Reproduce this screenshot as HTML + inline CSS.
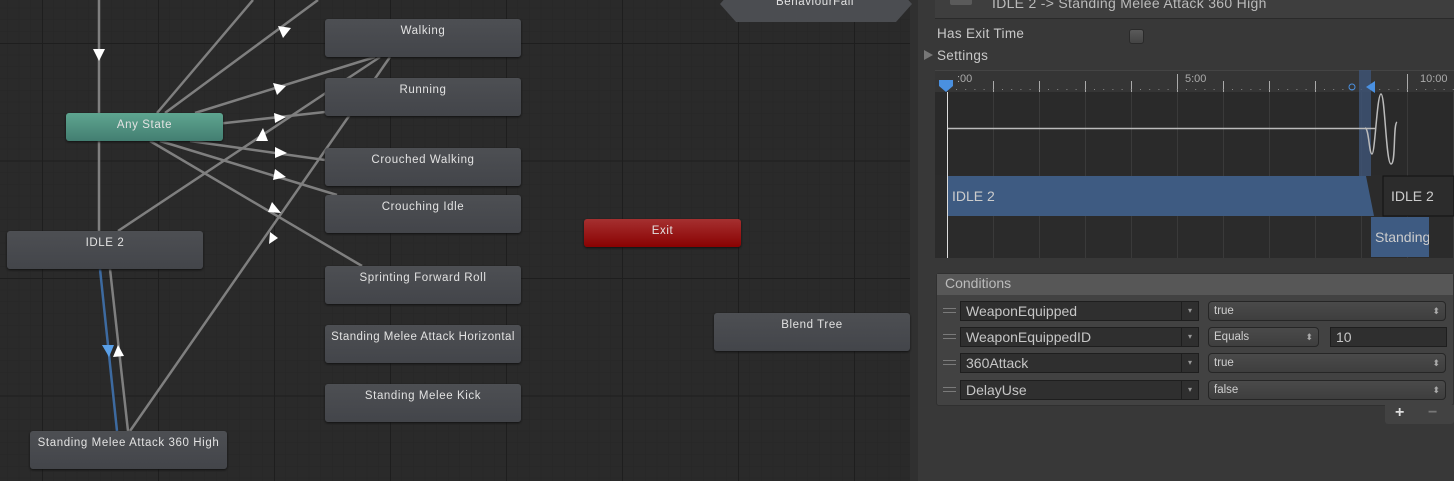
<!DOCTYPE html>
<html><head><meta charset="utf-8"><style>
*{margin:0;padding:0;box-sizing:border-box}
body{width:1454px;height:481px;overflow:hidden;background:#282828;font-family:"Liberation Sans",sans-serif;position:relative}
.abs{position:absolute}
.node{position:absolute;border-radius:3px;background:linear-gradient(#4d4f53,#43454a);box-shadow:0 1px 2px #111;color:#e2e2e2;font-size:11.5px;text-align:center;padding-top:6px;letter-spacing:0.6px;white-space:nowrap}
.panel{position:absolute;left:918px;top:0;width:536px;height:481px;background:#383838}
.t{position:absolute;color:#c8c8c8;font-size:13.5px;letter-spacing:0.3px}
.dd{position:absolute;height:20px;background:#2f2f2f;border:1px solid #1e1e1e;color:#c6c6c6;font-size:14px;padding-left:5px;line-height:18px}
.dd:after{content:"▾";position:absolute;right:0;top:0;width:16px;border-left:1px solid #1e1e1e;font-size:8px;color:#999;text-align:center}
.pp{position:absolute;height:20px;border-radius:4px;background:linear-gradient(#4a4a4a,#3e3e3e);border:1px solid #262626;color:#cfcfcf;font-size:11.5px;padding-left:5px;line-height:19px}
.pp:after{content:"⬍";position:absolute;right:5px;top:0;font-size:9px;color:#aaa}
.hd{position:absolute;left:6px;width:13px;height:5px;border-top:1px solid #7a7a7a;border-bottom:1px solid #7a7a7a}
</style></head><body>
<svg class="abs" style="left:0;top:0" width="918" height="481">
<defs>
<pattern id="mn" width="11.6" height="11.75" patternUnits="userSpaceOnUse" x="42" y="43"><path d="M0 0H11.6M0 0V11.75" stroke="#262626" stroke-width="1" fill="none"/></pattern>
<pattern id="mj" width="116" height="117.5" patternUnits="userSpaceOnUse" x="42" y="43"><path d="M0 0.5H116M0.5 0V117.5" stroke="#1e1e1e" stroke-width="1" fill="none"/></pattern>
</defs>
<rect width="918" height="481" fill="#2a2a2a"/>
<rect width="918" height="481" fill="url(#mn)"/>
<rect width="918" height="481" fill="url(#mj)"/>
<rect x="910" y="0" width="8" height="481" fill="#303030"/>
<g stroke="#7f7f7f" stroke-width="2.5" fill="none">
<line x1="99" y1="0" x2="99" y2="231"/>
<line x1="157" y1="113" x2="253" y2="0"/>
<line x1="165" y1="113" x2="318" y2="0"/>
<line x1="195" y1="113" x2="375" y2="57"/>
<line x1="216" y1="124" x2="325" y2="112"/>
<line x1="190" y1="141" x2="325" y2="160"/>
<line x1="160" y1="141" x2="337" y2="195"/>
<line x1="150" y1="141" x2="362" y2="266"/>
<line x1="118" y1="231" x2="380" y2="57"/>
<line x1="130" y1="431" x2="390" y2="57"/>
<line x1="110" y1="269" x2="128" y2="431"/>
</g>
<line x1="100" y1="269" x2="117" y2="431" stroke="#3d6aa0" stroke-width="2.5"/>
<g fill="#fff">
<path d="M93 49h12l-6 12z"/>
<path d="M278 26l13 2-8 10z"/>
<path d="M273 83l13 3-9 9z"/>
<path d="M274 113l12 4-11 6z"/>
<path d="M275 147l12 6-12 5z"/>
<path d="M275 169l11 8-13 3z"/>
<path d="M272 202l9 11-13-1z"/>
<path d="M263 128l-7 13h12z"/>
<path d="M270 232l-1 12 9-6z"/>
<path d="M113 357l5-12 6 11z"/>
</g>
<path d="M102 345h12l-5 12z" fill="#5aa0e8"/>
<path d="M720 4l16-18h160l16 18-16 18H736z" fill="#4b4d51"/>
</svg>
<div class="abs" style="left:720px;top:-4px;width:190px;text-align:center;color:#e2e2e2;font-size:11.5px;letter-spacing:0.6px">BehaviourFall</div>
<div class="node" style="left:325px;top:19px;width:196px;height:38px">Walking</div>
<div class="node" style="left:325px;top:78px;width:196px;height:38px">Running</div>
<div class="node" style="left:325px;top:148px;width:196px;height:38px">Crouched Walking</div>
<div class="node" style="left:325px;top:195px;width:196px;height:38px">Crouching Idle</div>
<div class="node" style="left:325px;top:266px;width:196px;height:38px">Sprinting Forward Roll</div>
<div class="node" style="left:325px;top:325px;width:196px;height:38px;letter-spacing:0.45px">Standing Melee Attack Horizontal</div>
<div class="node" style="left:325px;top:384px;width:196px;height:38px">Standing Melee Kick</div>
<div class="node" style="left:7px;top:231px;width:196px;height:38px">IDLE 2</div>
<div class="node" style="left:30px;top:431px;width:197px;height:38px">Standing Melee Attack 360 High</div>
<div class="node" style="left:714px;top:313px;width:196px;height:38px">Blend Tree</div>
<div class="node" style="left:66px;top:113px;width:157px;height:28px;background:linear-gradient(#5ea590,#437e71)">Any State</div>
<div class="node" style="left:584px;top:219px;width:157px;height:28px;background:linear-gradient(#a53030,#8a0202)">Exit</div>

<div class="panel">
<div class="abs" style="left:17px;top:0;width:519px;height:19px;background:#3e3e3e;border-bottom:1px solid #2a2a2a"></div>
<div class="abs" style="left:32px;top:0;width:22px;height:5px;background:#5a5a5a;border-radius:0 0 2px 2px"></div>
<div class="t" style="left:74px;top:-5px;font-size:14px;color:#bbb">IDLE 2 -&gt; Standing Melee Attack 360 High</div>
<div class="t" style="left:19px;top:26px">Has Exit Time</div>
<div class="abs" style="left:211px;top:29px;width:15px;height:15px;border-radius:3px;background:linear-gradient(#5a5a5a,#444);border:1px solid #2a2a2a"></div>
<div class="abs" style="left:6px;top:50px;width:0;height:0;border-left:9px solid #777;border-top:5px solid transparent;border-bottom:5px solid transparent"></div>
<div class="t" style="left:19px;top:48px">Settings</div>
<!-- timeline -->
<div class="abs" style="left:17px;top:70px;width:519px;height:188px;background:#2b2b2b">
 <div class="abs" style="left:0;top:0;width:519px;height:22px;background:#353535;border-top:1px solid #444"></div>
 <div class="abs" style="left:0;top:22px;width:519px;height:83px;background:#2a2a2a"></div>
 <svg class="abs" style="left:0;top:0" width="519" height="188">
  <g stroke="#3a3a3a"><line x1="58.5" y1="22" x2="58.5" y2="188"/><line x1="104.5" y1="22" x2="104.5" y2="188"/><line x1="150.5" y1="22" x2="150.5" y2="188"/><line x1="196.5" y1="22" x2="196.5" y2="188"/><line x1="242.5" y1="22" x2="242.5" y2="188"/><line x1="288.5" y1="22" x2="288.5" y2="188"/><line x1="334.5" y1="22" x2="334.5" y2="188"/><line x1="380.5" y1="22" x2="380.5" y2="188"/><line x1="426.5" y1="22" x2="426.5" y2="188"/><line x1="472.5" y1="22" x2="472.5" y2="188"/><line x1="518.5" y1="22" x2="518.5" y2="188"/></g>
  <g stroke="#aaa"><line x1="58.5" y1="11" x2="58.5" y2="22"/><line x1="104.5" y1="11" x2="104.5" y2="22"/><line x1="150.5" y1="11" x2="150.5" y2="22"/><line x1="196.5" y1="11" x2="196.5" y2="22"/><line x1="242.5" y1="4" x2="242.5" y2="22"/><line x1="288.5" y1="11" x2="288.5" y2="22"/><line x1="334.5" y1="11" x2="334.5" y2="22"/><line x1="380.5" y1="11" x2="380.5" y2="22"/><line x1="472.5" y1="4" x2="472.5" y2="22"/></g>
  <g stroke="#888" stroke-dasharray="1 8.2"><line x1="21" y1="19.5" x2="519" y2="19.5"/></g>
  <rect x="424" y="0" width="12" height="106" fill="#3e5578" opacity="0.8"/>
  <line x1="12" y1="58.5" x2="440" y2="58.5" stroke="#bbb" stroke-width="1.5"/>
  <path d="M430 58c4 0 4 26 7 26s5-60 9-60 5 70 10 70 2-40 6-42" stroke="#bbb" stroke-width="1.5" fill="none"/>
  <path d="M12 106h426l-7 0 8 40H12z" fill="#3e5b82"/>
  <rect x="448" y="106" width="71" height="40" fill="#2c2c2c" stroke="#111"/>
  <rect x="436" y="147" width="58" height="40" fill="#3e5b82"/>
  <path d="M440 11l-9 6 9 6z" fill="#4a90e0"/>
  <circle cx="417" cy="17" r="3" fill="none" stroke="#4a90e0"/>
  <path d="M4 10h14v6l-7 6-7-6z" fill="#4a90e0"/>
  <line x1="12.5" y1="22" x2="12.5" y2="188" stroke="#ddd"/>
 </svg>
 <div class="abs" style="left:22px;top:3px;color:#aaa;font-size:11px">:00</div>
 <div class="abs" style="left:250px;top:3px;color:#aaa;font-size:11px">5:00</div>
 <div class="abs" style="left:485px;top:3px;color:#aaa;font-size:11px">10:00</div>
 <div class="abs" style="left:17px;top:118px;color:#ccc;font-size:14px">IDLE 2</div>
 <div class="abs" style="left:456px;top:118px;color:#ccc;font-size:14px">IDLE 2</div>
 <div class="abs" style="left:440px;top:159px;width:54px;overflow:hidden;color:#ccc;font-size:14px;white-space:nowrap">Standing</div>
</div>
<!-- conditions -->
<div class="abs" style="left:18px;top:273px;width:518px;height:133px;background:#424242;border:1px solid #303030;border-radius:3px">
 <div class="abs" style="left:0;top:0;width:516px;height:21px;background:#575757;color:#bbb;font-size:14px;padding:1px 0 0 8px">Conditions</div>
 <div class="hd" style="top:34px"></div><div class="hd" style="top:60px"></div><div class="hd" style="top:86px"></div><div class="hd" style="top:113px"></div>
 <div class="dd" style="left:23px;top:27px;width:239px">WeaponEquipped</div>
 <div class="dd" style="left:23px;top:53px;width:239px">WeaponEquippedID</div>
 <div class="dd" style="left:23px;top:79px;width:239px">360Attack</div>
 <div class="dd" style="left:23px;top:106px;width:239px">DelayUse</div>
 <div class="pp" style="left:271px;top:27px;width:238px">true</div>
 <div class="pp" style="left:271px;top:53px;width:111px">Equals</div>
 <div class="abs" style="left:393px;top:53px;width:117px;height:20px;background:#2f2f2f;border:1px solid #1e1e1e;color:#c6c6c6;font-size:14px;padding-left:5px;line-height:18px">10</div>
 <div class="pp" style="left:271px;top:79px;width:238px">true</div>
 <div class="pp" style="left:271px;top:106px;width:238px">false</div>
</div>
<div class="abs" style="left:467px;top:405px;width:69px;height:19px;background:#424242;border-radius:0 0 3px 3px;color:#ddd;font-size:16px;font-weight:bold">
 <span class="abs" style="left:10px;top:-1px">+</span><span class="abs" style="left:43px;top:-1px;color:#777">−</span></div>
</div>
</body></html>
